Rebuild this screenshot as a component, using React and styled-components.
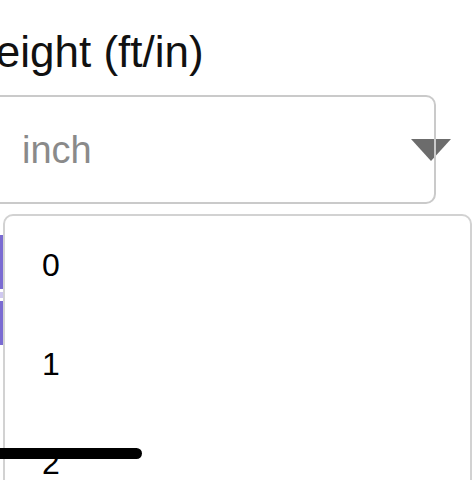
import React from "react";
import styled, { createGlobalStyle } from "styled-components";

const Global = createGlobalStyle`
  html, body {
    margin: 0;
    padding: 0;
    background: #ffffff;
  }
  body {
    font-family: "Liberation Sans", Arial, sans-serif;
    overflow: hidden;
  }
`;

const Screen = styled.div`
  position: relative;
  width: 474px;
  height: 480px;
  overflow: hidden;
  background: #ffffff;
`;

const Form = styled.div`
  display: flex;
  flex-direction: column;
  margin-left: -36px;
  width: 472px;
  padding-top: 30px;
`;

const Label = styled.div`
  font-size: 44px;
  line-height: 44px;
  color: #111111;
  white-space: nowrap;
`;

const SelectBox = styled.div`
  position: relative;
  margin-top: 21px;
  height: 109px;
  display: flex;
  align-items: center;
  padding-left: 58px;
  border-radius: 10px;

  &::after {
    content: "";
    position: absolute;
    inset: 0;
    border: 2px solid #cacaca;
    border-radius: 10px;
    pointer-events: none;
    z-index: 2;
  }
`;

const Placeholder = styled.span`
  font-size: 38px;
  line-height: 38px;
  color: #8a8a8a;
`;

const Caret = styled.span`
  position: absolute;
  right: -15px;
  top: 50%;
  margin-top: -11px;
  width: 0;
  height: 0;
  border-left: 20px solid transparent;
  border-right: 20px solid transparent;
  border-top: 22px solid #6c6c6c;
  z-index: 1;
`;

const ButtonStack = styled.div`
  display: flex;
  flex-direction: column;
  margin-top: 31px;
`;

const PurpleBar = styled.div`
  height: ${(p) => p.$h}px;
  background: #7a6bd2;
  border-radius: 4px;
`;

const Gap = styled.div`
  height: 6px;
  border-top: 3px solid #ffffff;
  border-bottom: 3px solid #ffffff;
  background: #cfc8f0;
`;

const Menu = styled.ul`
  position: absolute;
  top: 214px;
  left: 3px;
  width: 469px;
  height: 420px;
  margin: 0;
  padding: 0;
  list-style: none;
  box-sizing: border-box;
  background: #ffffff;
  border: 2px solid #d2d2d2;
  border-radius: 10px;
  z-index: 5;
`;

const Option = styled.li`
  height: 99px;
  line-height: 99px;
  padding-left: 37px;
  font-size: 32px;
  color: #000000;
`;

const HomeIndicator = styled.div`
  position: absolute;
  top: 448px;
  left: -150px;
  width: 292px;
  height: 11px;
  border-radius: 6px;
  background: #000000;
  z-index: 10;
`;

export default function App() {
  return (
    <>
      <Global />
      <Screen>
        <Form>
          <Label>Height (ft/in)</Label>
          <SelectBox>
            <Placeholder>inch</Placeholder>
            <Caret />
          </SelectBox>
          <ButtonStack>
            <PurpleBar $h={54} />
            <Gap />
            <PurpleBar $h={44} />
          </ButtonStack>
        </Form>
        <Menu>
          <Option>0</Option>
          <Option>1</Option>
          <Option>2</Option>
        </Menu>
        <HomeIndicator />
      </Screen>
    </>
  );
}
